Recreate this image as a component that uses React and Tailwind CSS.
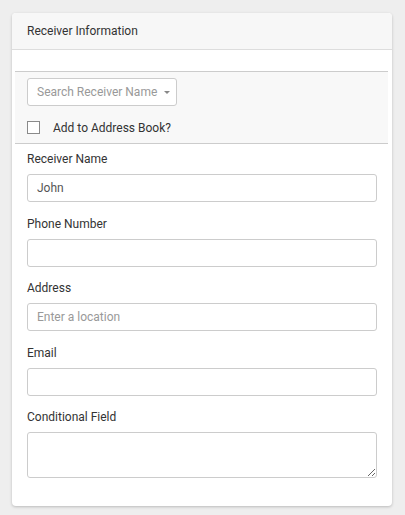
import React from 'react'

const Field = ({ label, children }) => (
    <div className="mb-[12.5px]">
        <label className="block text-[12px] leading-[18px] mb-[6px] text-[#333]">{label}</label>
        {children}
    </div>
)

const inputCls = 'block w-full h-[28px] px-[9px] border border-[#ccc] rounded-[3px] bg-white text-[12px] text-[#555] placeholder:text-[#999] outline-none'

const App = () => {
    return (
        <div className="min-h-[515px] bg-[#eeeeee] pt-[13px] pl-[12px] pr-[13px]" style={{ fontFamily: 'Roboto, "Noto Sans", sans-serif' }}>
            <div className="w-[380px] bg-white rounded-[4px] shadow-[0_1px_3px_rgba(0,0,0,0.22)]">
                <div className="h-[37px] bg-[#f7f7f7] border-b border-[#dddddd] rounded-t-[4px] px-[15px] flex items-center text-[12px] text-[#333]">
                    Receiver Information
                </div>
                <div className="h-[21px]"></div>
                <div className="ml-[3px] mr-[4px] bg-[#f8f8f8] border-y border-[#cccccc] px-[12px] pt-[6px] pb-[9px]">
                    <div className="w-[150px] h-[28px] border border-[#cccccc] rounded-[3px] bg-white flex items-center justify-between pl-[9px] pr-[6px]">
                        <span className="text-[12px] text-[#999]">Search Receiver Name</span>
                        <span className="w-0 h-0 border-l-[3px] border-r-[3px] border-t-[3px] border-l-transparent border-r-transparent border-t-[#888]"></span>
                    </div>
                    <div className="mt-[15px] flex items-center h-[13px]">
                        <span className="w-[13px] h-[13px] border border-[#8a8a8a] bg-white"></span>
                        <span className="ml-[13px] text-[12px] text-[#333]">Add to Address Book?</span>
                    </div>
                </div>
                <div className="px-[15px] pt-[6px] pb-[15.5px]">
                    <Field label="Receiver Name">
                        <input className={inputCls} defaultValue="John" />
                    </Field>
                    <Field label="Phone Number">
                        <input className={inputCls} />
                    </Field>
                    <Field label="Address">
                        <input className={inputCls} placeholder="Enter a location" />
                    </Field>
                    <Field label="Email">
                        <input className={inputCls} />
                    </Field>
                    <Field label="Conditional Field">
                        <textarea className="block w-full h-[46px] px-[9px] py-[5px] border border-[#ccc] rounded-[3px] bg-white text-[12px] text-[#555] outline-none"></textarea>
                    </Field>
                </div>
            </div>
        </div>
    )
}

export default App
